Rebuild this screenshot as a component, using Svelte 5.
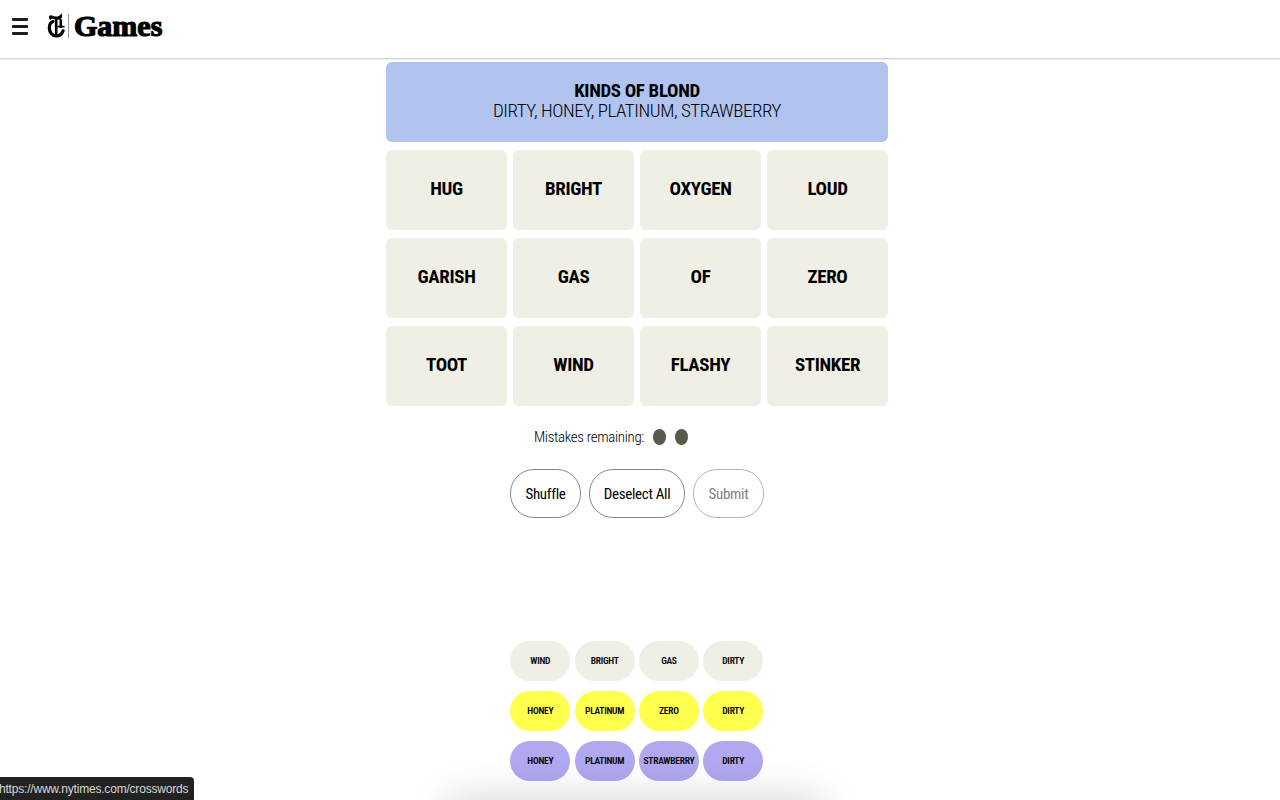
<script>
  const rows = [
    ['HUG', 'BRIGHT', 'OXYGEN', 'LOUD'],
    ['GARISH', 'GAS', 'OF', 'ZERO'],
    ['TOOT', 'WIND', 'FLASHY', 'STINKER']
  ];

  // two of the four mistakes are already used, their dots keep their space
  const mistakes = [true, true, false, false];

  // previous guesses shown under the buttons
  const guesses = [
    { color: 'grey', words: ['WIND', 'BRIGHT', 'GAS', 'DIRTY'] },
    { color: 'yellow', words: ['HONEY', 'PLATINUM', 'ZERO', 'DIRTY'] },
    { color: 'purple', words: ['HONEY', 'PLATINUM', 'STRAWBERRY', 'DIRTY'] }
  ];
</script>

<header class="topbar">
  <button class="menu" aria-label="Menu">
    <span></span><span></span><span></span>
  </button>
  <div class="logo">
    <svg class="t-mark" width="18" height="26" viewBox="0 0 18 26" aria-hidden="true">
      <path d="M2 3.2c1.8 -2 3.8 .2 6.6 .4c2.6 .2 4.6 -1 5.8 -3.4c1.4 2 1 5.2 -1.4 6.2c-2.6 1.1 -5.6 -.5 -8 -.7c-1 0 -1.4 .5 -1.4 1.6c-1.4 -1 -2 -2.9 -1.6 -4.1z" fill="#000"/>
      <g fill="none" stroke="#000" stroke-linecap="round">
        <path d="M6 8.4c-2.8 1.4 -3.7 3.6 -3.7 6.4c0 4.8 3.2 8.2 7 8.2c3.4 0 5.8 -2 6.8 -5.2" stroke-width="3.2"/>
        <path d="M9.2 7v15" stroke-width="2.6"/>
        <path d="M13.8 7.4v6.4" stroke-width="2.6"/>
        <path d="M11 13.6h5.8" stroke-width="1.8"/>
      </g>
    </svg>
    <i class="divider"></i>
    <span class="games">Games</span>
  </div>
</header>

<main class="board">
  <section class="solved">
    <h3>KINDS OF BLOND</h3>
    <p>DIRTY, HONEY, PLATINUM, STRAWBERRY</p>
  </section>

  {#each rows as row}
    <div class="row">
      {#each row as word}
        <button class="card">{word}</button>
      {/each}
    </div>
  {/each}

  <div class="mistakes">
    <span>Mistakes remaining:</span>
    {#each mistakes as left}
      <i class="dot" class:used={!left}></i>
    {/each}
  </div>

  <div class="actions">
    <button class="pill shuffle">Shuffle</button>
    <button class="pill deselect">Deselect All</button>
    <button class="pill submit" disabled>Submit</button>
  </div>

  <div class="history">
    {#each guesses as guess}
      <div class="guess">
        {#each guess.words as word}
          <span class="chip {guess.color}">{word}</span>
        {/each}
      </div>
    {/each}
  </div>
</main>

<div class="shade"></div>
<div class="status">https://www.nytimes.com/crosswords</div>

<style>
  :global(body) {
    background: #fff;
    font-family: "Roboto Condensed", "Liberation Sans Narrow", "Liberation Sans", sans-serif;
    color: #000;
    height: 800px;
    overflow: hidden;
  }

  .topbar {
    display: flex;
    align-items: center;
    height: 58px;
    padding-left: 12px;
    border-bottom: 1px solid #d6d6d6;
    box-shadow: 0 1px 0 #ececec;
  }

  .menu {
    display: flex;
    flex-direction: column;
    justify-content: space-between;
    width: 16px;
    height: 17px;
    padding: 0;
    margin: 0 0 5px;
    border: 0;
    background: none;
  }

  .menu span {
    display: block;
    height: 3px;
    border-radius: 1px;
    background: #1c1c1c;
  }

  .logo {
    display: flex;
    align-items: center;
    margin: 0 0 6px 19px;
  }

  .divider {
    width: 1px;
    height: 24px;
    margin: 0 5px 0 3px;
    background: #999;
  }

  .games {
    font-family: "Liberation Serif", serif;
    font-size: 30px;
    font-weight: 700;
    line-height: 28px;
    color: #000;
    -webkit-text-stroke: 1.2px #000;
  }

  .board {
    display: flex;
    flex-direction: column;
    align-items: center;
    width: 502px;
    margin: 3px 0 0 386px;
  }

  .solved {
    width: 100%;
    height: 80px;
    box-sizing: border-box;
    padding-top: 19px;
    margin-bottom: 8px;
    border-radius: 6px;
    background: #b0c4ef;
    text-align: center;
  }

  .solved h3 {
    margin: 0;
    font-size: 19px;
    font-weight: 700;
    letter-spacing: -.35px;
    line-height: 20px;
  }

  .solved p {
    margin: 0;
    font-size: 19px;
    font-weight: 300;
    letter-spacing: -.45px;
    line-height: 20px;
  }

  .row {
    display: flex;
    gap: 6px;
    margin-bottom: 8px;
  }

  .card {
    width: 121px;
    height: 80px;
    padding: 0 0 4px;
    border: 0;
    border-radius: 6px;
    background: #efefe6;
    color: #000;
    font-family: inherit;
    font-size: 19px;
    font-weight: 700;
    letter-spacing: -.35px;
  }

  .mistakes {
    display: flex;
    align-items: center;
    height: 24px;
    margin: 11px 0 0;
    padding-right: 8px;
    font-size: 15px;
    font-weight: 300;
    letter-spacing: -.35px;
  }

  .dot {
    width: 13px;
    height: 16px;
    border-radius: 50%;
    background: #5a594e;
    margin-left: 9px;
  }

  .dot.used {
    visibility: hidden;
  }

  .actions {
    display: flex;
    gap: 8px;
    margin-top: 20px;
  }

  .pill {
    height: 49px;
    padding: 0;
    border: 1px solid #8a8a8a;
    border-radius: 24px;
    background: #fff;
    color: #000;
    font-family: inherit;
    font-size: 15px;
    letter-spacing: -.3px;
  }

  .shuffle { width: 71px; }
  .deselect { width: 96px; }
  .submit {
    width: 71px;
    border-color: #b5b5b5;
    color: #7f7f7f;
  }

  .history {
    display: flex;
    flex-direction: column;
    gap: 10px;
    margin-top: 123px;
  }

  .guess {
    display: flex;
    gap: 4.3px;
    margin-right: .5px;
  }

  .chip {
    display: flex;
    align-items: center;
    justify-content: center;
    width: 60px;
    height: 40px;
    padding-bottom: 1px;
    box-sizing: border-box;
    border-radius: 20px;
    color: #000;
    font-size: 9.5px;
    font-weight: 600;
    letter-spacing: -.25px;
    white-space: nowrap;
  }

  .grey { background: #efefe6; }
  .yellow { background: #ffff4d; }
  .purple { background: #b0a8f0; }

  .shade {
    position: fixed;
    left: 445px;
    bottom: -30px;
    width: 380px;
    height: 30px;
    border-radius: 20px;
    box-shadow: 0 0 40px 0 rgba(0, 0, 0, .2);
  }

  .status {
    position: fixed;
    left: 0;
    bottom: 0;
    width: 194px;
    height: 23px;
    border-top-right-radius: 4px;
    background: #222;
    color: #d8d8d8;
    font-family: "Liberation Sans", sans-serif;
    font-size: 12px;
    letter-spacing: -.2px;
    line-height: 24px;
    white-space: nowrap;
    overflow: hidden;
    text-indent: -1px;
  }
</style>
